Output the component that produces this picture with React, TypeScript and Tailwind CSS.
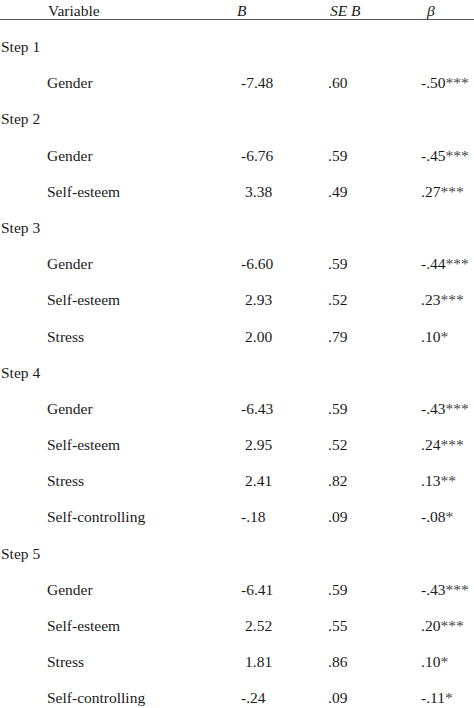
type Row = { label: string; step?: boolean; b?: string; se?: string; beta?: string; stars?: string };

const rows: Row[] = [
  { label: 'Step 1', step: true },
  { label: 'Gender', b: '-7.48', se: '.60', beta: '-.50', stars: '***' },
  { label: 'Step 2', step: true },
  { label: 'Gender', b: '-6.76', se: '.59', beta: '-.45', stars: '***' },
  { label: 'Self-esteem', b: '3.38', se: '.49', beta: '.27', stars: '***' },
  { label: 'Step 3', step: true },
  { label: 'Gender', b: '-6.60', se: '.59', beta: '-.44', stars: '***' },
  { label: 'Self-esteem', b: '2.93', se: '.52', beta: '.23', stars: '***' },
  { label: 'Stress', b: '2.00', se: '.79', beta: '.10', stars: '*' },
  { label: 'Step 4', step: true },
  { label: 'Gender', b: '-6.43', se: '.59', beta: '-.43', stars: '***' },
  { label: 'Self-esteem', b: '2.95', se: '.52', beta: '.24', stars: '***' },
  { label: 'Stress', b: '2.41', se: '.82', beta: '.13', stars: '**' },
  { label: 'Self-controlling', b: '-.18', se: '.09', beta: '-.08', stars: '*' },
  { label: 'Step 5', step: true },
  { label: 'Gender', b: '-6.41', se: '.59', beta: '-.43', stars: '***' },
  { label: 'Self-esteem', b: '2.52', se: '.55', beta: '.20', stars: '***' },
  { label: 'Stress', b: '1.81', se: '.86', beta: '.10', stars: '*' },
  { label: 'Self-controlling', b: '-.24', se: '.09', beta: '-.11', stars: '*' },
];

export default function App() {
  return (
    <div className="w-[474px] h-[708px] overflow-hidden bg-white text-[#1a1a1a] text-[15.5px] font-['Liberation_Serif','DejaVu_Serif',serif]">
      {/* header */}
      <div className="grid grid-cols-[237px_93px_97px_1fr] h-[20px] pt-[2px] leading-[18px] border-b border-[#555] whitespace-nowrap">
        <div className="pl-[48px]">Variable</div>
        <div className="italic">B</div>
        <div className="italic">SE B</div>
        <div className="italic">β</div>
      </div>

      <div className="mt-[9px]">
        {rows.map((r, i) => (
          <div
            key={i}
            className="grid grid-cols-[241px_87px_93px_1fr] h-[36.2px] leading-[36.2px] whitespace-nowrap"
          >
            <div className={r.step ? 'pl-[1px]' : 'pl-[47px]'}>{r.label}</div>
            <div className={r.b && !r.b.startsWith('-') ? 'pl-[4px]' : ''}>{r.b}</div>
            <div>{r.se}</div>
            <div>
              {r.beta}
              {r.stars && <span className="text-[#444]">{r.stars}</span>}
            </div>
          </div>
        ))}
      </div>
    </div>
  );
}
